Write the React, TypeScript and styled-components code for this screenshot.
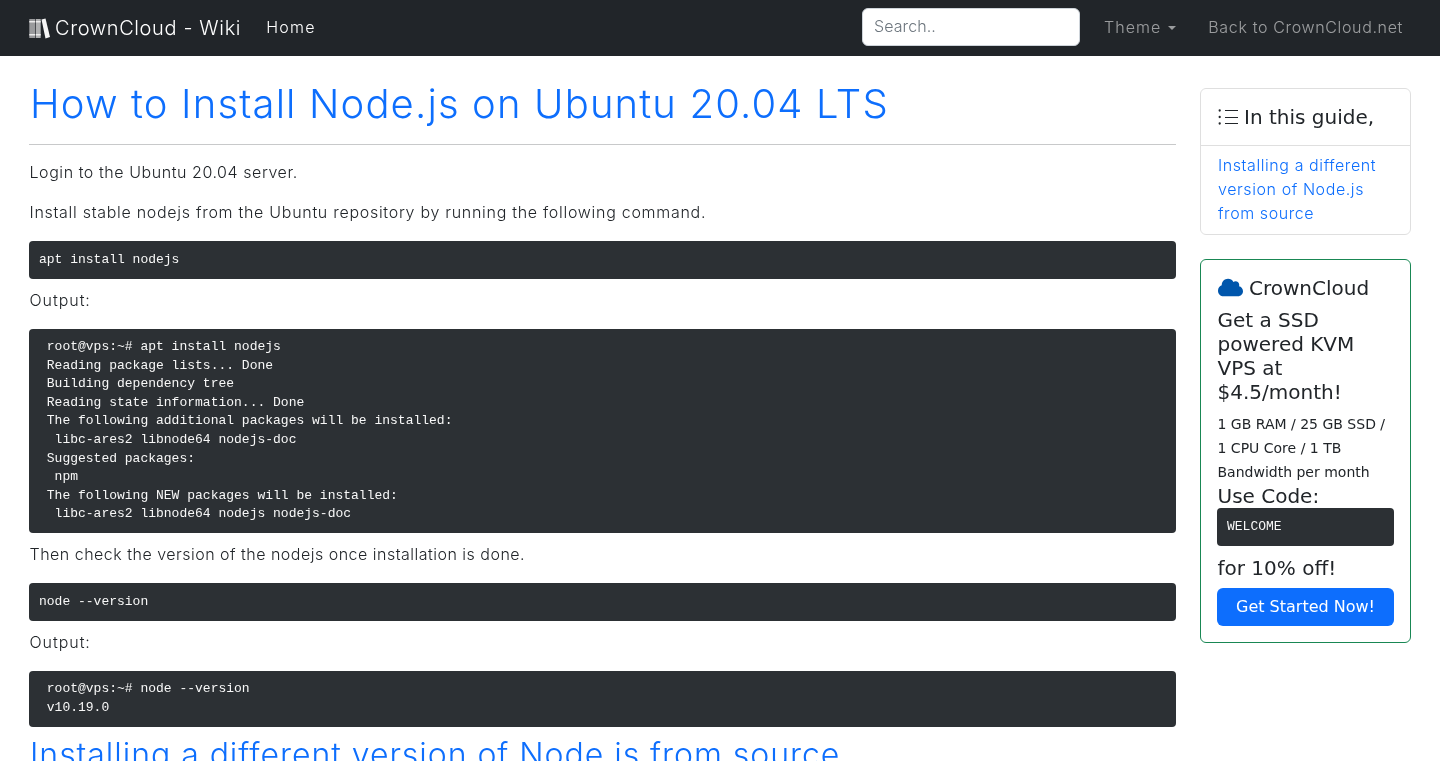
import React from "react";
import styled, { createGlobalStyle } from "styled-components";
import { FaCloud } from "react-icons/fa";

const GlobalStyle = createGlobalStyle`
  html, body {
    margin: 0;
    height: 100%;
    overflow: hidden;
  }
  body {
    background: #fff;
    color: #212529;
    font-family: "Inter", "Noto Sans", sans-serif;
    font-size: 16px;
    font-weight: 300;
    line-height: 24px;
  }
  * {
    box-sizing: border-box;
  }
`;

const sidebarFont = `"DejaVu Sans", "Liberation Sans", sans-serif`;

const Shell = styled.div`
  will-change: transform;
`;

const Navbar = styled.nav`
  display: flex;
  align-items: center;
  height: 56px;
  padding: 0 37px 2px 29px;
  background: #212529;
`;

const Brand = styled.a`
  display: flex;
  align-items: center;
  gap: 5px;
  margin: 2px 25px 0 0;
  color: #fff;
  font-size: 20px;
  letter-spacing: 0.63px;
  text-decoration: none;
`;

const NavLink = styled.a<{ $muted?: boolean }>`
  color: ${(props) => (props.$muted ? "rgba(255, 255, 255, 0.55)" : "#fff")};
  font-size: 16px;
  letter-spacing: ${(props) => (props.$muted ? "0.65px" : "1.3px")};
  text-decoration: none;
  white-space: nowrap;
`;

const NavRight = styled.div`
  display: flex;
  align-items: center;
  margin-left: auto;
`;

const Search = styled.input`
  width: 218px;
  height: 38px;
  margin-right: 24px;
  padding: 0 11px 2px;
  border: 1px solid #ced4da;
  border-radius: 6px;
  font: inherit;
  letter-spacing: 0.1px;
  &::placeholder {
    color: #6c757d;
  }
`;

const Caret = styled.span`
  display: inline-block;
  margin-left: 7px;
  vertical-align: 3px;
  border-top: 4.8px solid;
  border-left: 4.8px solid transparent;
  border-right: 4.8px solid transparent;
`;

const ThemeLink = styled(NavLink)`
  margin-right: 32px;
  letter-spacing: 1.05px;
`;

const Page = styled.div`
  display: grid;
  grid-template-columns: 1147px 211px;
  column-gap: 24px;
  padding: 24px 29px 0;
`;

const Article = styled.main`
  display: flex;
  flex-direction: column;
  min-width: 0;
`;

const Title = styled.h1`
  margin: 0 0 16px 1px;
  color: #0d6efd;
  font-size: 40px;
  font-weight: 300;
  letter-spacing: 1.15px;
  line-height: 48px;
`;

const Rule = styled.hr`
  width: 100%;
  margin: 0 0 15px;
  border: 0;
  border-top: 1px solid #c8c9ca;
`;

const Text = styled.p<{ $tracking: number }>`
  margin: 0 0 16px 0.5px;
  letter-spacing: ${(props) => props.$tracking}px;
`;

const Code = styled.pre<{ $output?: boolean }>`
  margin: 1px 0 9px;
  padding: ${(props) => (props.$output ? "9.2px 10px" : "10px")};
  border-radius: 4px;
  background: #2c3034;
  color: #f8f8f8;
  font-family: "Liberation Mono", monospace;
  font-size: 13px;
  font-weight: 400;
  line-height: ${(props) => (props.$output ? "18.57px" : "18px")};
  overflow: hidden;
`;

const SubTitle = styled.h2`
  margin: 0 0 0 1px;
  color: #0d6efd;
  font-size: 32px;
  font-weight: 300;
  letter-spacing: 0.96px;
  line-height: 38px;
  white-space: nowrap;
`;

const Sidebar = styled.aside`
  display: flex;
  flex-direction: column;
  gap: 24px;
  padding-top: 8px;
  font-family: ${sidebarFont};
  font-weight: 400;
`;

const GuideCard = styled.section`
  border: 1px solid #dfdfdf;
  border-radius: 6px;
`;

const GuideHeader = styled.h5`
  display: flex;
  align-items: center;
  gap: 6px;
  height: 57px;
  margin: 0;
  padding: 0 17px;
  border-bottom: 1px solid #dfdfdf;
  font-size: 20px;
  font-weight: 400;
`;

const GuideLink = styled.a`
  display: block;
  padding: 7px 16px 9px 17px;
  color: #0d6efd;
  font-family: "Inter", "Noto Sans", sans-serif;
  font-weight: 300;
  letter-spacing: 0.58px;
  text-decoration: none;
`;

const PromoCard = styled.section`
  padding: 15px 16px 16px;
  border: 1px solid #198754;
  border-radius: 6px;
`;

const PromoBrand = styled.div`
  display: flex;
  align-items: center;
  gap: 6px;
  padding-left: 1px;
  font-size: 20px;
  line-height: 24px;
  margin-bottom: 8px;
  color: #212529;
  svg {
    color: #0056ac;
  }
`;

const PromoLine = styled.div`
  padding-left: 0.5px;
  font-size: 20px;
  line-height: 24px;
`;

const PromoSmall = styled.div`
  padding-left: 0.5px;
  font-size: 14px;
  line-height: 24px;
  margin-top: 8px;
`;

const PromoCode = styled(Code)`
  margin: 0 0 10px;
`;

const PromoButton = styled.a`
  display: block;
  height: 38px;
  margin-top: 8px;
  border-radius: 6px;
  background: #0d6efd;
  color: #fff;
  line-height: 38px;
  text-align: center;
  text-decoration: none;
`;

const Logo = () => (
  <svg width="21" height="21" viewBox="0 0 21 21" aria-hidden="true">
    <rect x="0.3" y="1" width="5.7" height="19" fill="#9a9b9d" />
    <rect x="6.7" y="1" width="5" height="19" fill="#b0b1b2" />
    <rect x="0.3" y="3" width="5.7" height="1.5" fill="#ececec" />
    <rect x="0.3" y="16" width="5.7" height="1.5" fill="#ececec" />
    <rect x="6.7" y="3" width="5" height="1.5" fill="#ececec" />
    <rect x="6.7" y="16" width="5" height="1.5" fill="#ececec" />
    <polygon points="12.5,1.5 16.5,0.5 21,19 16.5,20.5" fill="#f6f6f6" />
  </svg>
);

const ListIcon = () => (
  <svg width="20" height="16" viewBox="0 0 20 16" aria-hidden="true">
    <circle cx="1.7" cy="1.5" r="1.15" fill="#212529" />
    <circle cx="1.7" cy="8" r="1.15" fill="#212529" />
    <circle cx="1.7" cy="14.5" r="1.15" fill="#212529" />
    <path d="M7 1.5H20M7 8.5H20M7 14.5H20" stroke="#212529" strokeWidth="1" fill="none" />
  </svg>
);

const installOutput = ` root@vps:~# apt install nodejs
 Reading package lists... Done
 Building dependency tree
 Reading state information... Done
 The following additional packages will be installed:
  libc-ares2 libnode64 nodejs-doc
 Suggested packages:
  npm
 The following NEW packages will be installed:
  libc-ares2 libnode64 nodejs nodejs-doc`;

const versionOutput = ` root@vps:~# node --version
 v10.19.0`;

export default function App() {
  return (
    <Shell>
      <GlobalStyle />
      <Navbar>
        <Brand href="#">
          <Logo />
          CrownCloud - Wiki
        </Brand>
        <NavLink href="#">Home</NavLink>
        <NavRight>
          <Search placeholder="Search.." />
          <ThemeLink href="#" $muted>
            Theme
            <Caret />
          </ThemeLink>
          <NavLink href="#" $muted>
            Back to CrownCloud.net
          </NavLink>
        </NavRight>
      </Navbar>
      <Page>
        <Article>
          <Title>How to Install Node.js on Ubuntu 20.04 LTS</Title>
          <Rule />
          <Text $tracking={0.56}>Login to the Ubuntu 20.04 server.</Text>
          <Text $tracking={0.71}>Install stable nodejs from the Ubuntu repository by running the following command.</Text>
          <Code>apt install nodejs</Code>
          <Text $tracking={0.95}>Output:</Text>
          <Code $output>{installOutput}</Code>
          <Text $tracking={0.49}>Then check the version of the nodejs once installation is done.</Text>
          <Code>node --version</Code>
          <Text $tracking={0.95}>Output:</Text>
          <Code $output>{versionOutput}</Code>
          <SubTitle>Installing a different version of Node.js from source</SubTitle>
        </Article>
        <Sidebar>
          <GuideCard>
            <GuideHeader>
              <ListIcon />
              In this guide,
            </GuideHeader>
            <GuideLink href="#">Installing a different version of Node.js from source</GuideLink>
          </GuideCard>
          <PromoCard>
            <PromoBrand>
              <FaCloud size={25} />
              CrownCloud
            </PromoBrand>
            <PromoLine>Get a SSD powered KVM VPS at $4.5/month!</PromoLine>
            <PromoSmall>1 GB RAM / 25 GB SSD / 1 CPU Core / 1 TB Bandwidth per month</PromoSmall>
            <PromoLine>Use Code:</PromoLine>
            <PromoCode>WELCOME</PromoCode>
            <PromoLine>for 10% off!</PromoLine>
            <PromoButton href="#">Get Started Now!</PromoButton>
          </PromoCard>
        </Sidebar>
      </Page>
    </Shell>
  );
}
